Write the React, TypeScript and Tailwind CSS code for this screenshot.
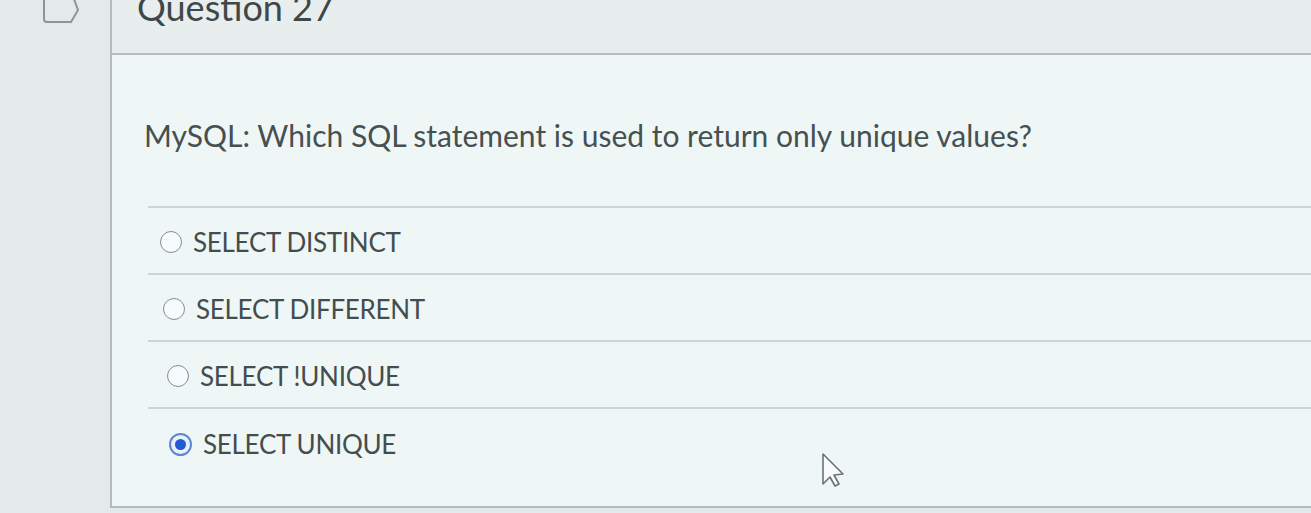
import React from 'react';

const options = [
  { label: 'SELECT DISTINCT', pad: 'pl-[12px]', selected: false },
  { label: 'SELECT DIFFERENT', pad: 'pl-[15px]', selected: false },
  { label: 'SELECT !UNIQUE', pad: 'pl-[19px]', selected: false },
  { label: 'SELECT UNIQUE', pad: 'pl-[21px]', selected: true },
];

const Radio = ({ checked }: { checked: boolean }) =>
  checked ? (
    <span className="flex h-[23px] w-[23px] shrink-0 items-center justify-center rounded-full border-2 border-[#5d86d4] bg-[#e9f0fb]">
      <span className="h-[11px] w-[11px] rounded-full bg-[#1f5bd2]" />
    </span>
  ) : (
    <span className="h-[22px] w-[22px] shrink-0 rounded-full border-[1.5px] border-[#858e8e] bg-[#f6fbfb]" />
  );

const FlagIcon = () => (
  <svg width="40" height="36" viewBox="0 0 40 36" fill="none" className="mt-[-11px]">
    <path
      d="M3 2 V30 Q3 33 6 33 H30 L37 21 L30 2"
      stroke="#8c9696"
      strokeWidth="2"
      strokeLinejoin="round"
    />
  </svg>
);

const Cursor = () => (
  <svg width="26" height="36" viewBox="0 0 26 36" className="absolute left-[820px] top-[452px]">
    <path
      d="M3 2 L3 32 L10 25 L15 34 L19 32 L14 23 L23 22 Z"
      fill="#f7fbfb"
      stroke="#6b7474"
      strokeWidth="1.6"
      strokeLinejoin="round"
    />
  </svg>
);

export default function App() {
  return (
    <div
      className="relative flex h-[513px] w-[1311px] overflow-hidden bg-[#e4eaea] text-[#434d4d]"
      style={{ fontFamily: 'Lato, "Open Sans", sans-serif' }}
    >
      <div className="w-[110px] shrink-0 pl-[41px]">
        <FlagIcon />
      </div>

      <div className="mb-[5px] flex flex-1 flex-col border-b-2 border-l-2 border-[#b3bbbb] bg-[#eff6f6]">
        <div className="h-[55px] shrink-0 border-b-2 border-[#b6bebe] bg-[#e8eeee] pl-[25px]">
          <h2 className="mt-[-11px] text-[36px] leading-[36px] text-[#3e4848]">Question 27</h2>
        </div>

        <div className="flex flex-1 flex-col pl-[36px]">
          <p className="ml-[-4px] pt-[65px] text-[30px] leading-[30px] text-[#465050]">
            MySQL: Which SQL statement is used to return only unique values?
          </p>

          <div className="mt-[56px] flex flex-col border-t-2 border-[#cdd4d4]">
            {options.map((o, i) => (
              <div
                key={o.label}
                className={`flex h-[67px] items-center gap-[11px] pt-[3px] ${o.pad} ${
                  i < options.length - 1 ? 'border-b-2 border-[#cdd4d4]' : ''
                }`}
              >
                <Radio checked={o.selected} />
                <span className="text-[26px] leading-[26px] tracking-[-0.3px] text-[#434d4d]">{o.label}</span>
              </div>
            ))}
          </div>
        </div>
      </div>

      <Cursor />
    </div>
  );
}
